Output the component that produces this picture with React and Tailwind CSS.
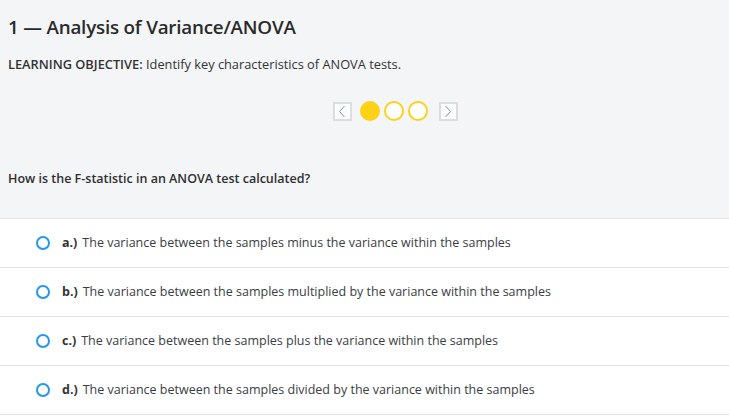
import React from "react";

const options = [
  ["a.)", "The variance between the samples minus the variance within the samples"],
  ["b.)", "The variance between the samples multiplied by the variance within the samples"],
  ["c.)", "The variance between the samples plus the variance within the samples"],
  ["d.)", "The variance between the samples divided by the variance within the samples"],
];

function Chevron({ dir }) {
  return (
    <svg width="8" height="13" viewBox="0 0 8 13" fill="none">
      {dir === "left" ? (
        <path d="M6.5 1 L1.5 6.5 L6.5 12" stroke="#5b8def" strokeWidth="1" />
      ) : (
        <path d="M1.5 1 L6.5 6.5 L1.5 12" stroke="#5b8def" strokeWidth="1" />
      )}
    </svg>
  );
}

export default function App() {
  return (
    <div className="w-[729px] h-[416px] bg-white overflow-hidden text-[#2b2b2b]" style={{ fontFamily: "'Open Sans', 'Noto Sans', sans-serif" }}>
      <div className="bg-[#f4f5f7] h-[218px] px-2 pt-[14px]">
        <h1 className="text-[18.8px] leading-[26px] font-semibold text-[#2a2a2a] tracking-[-0.2px]">1 — Analysis of Variance/ANOVA</h1>
        <p className="mt-[16px] text-[12.8px] leading-[16px] text-[#333]">
          <span className="font-semibold">LEARNING OBJECTIVE:</span> Identify key characteristics of ANOVA tests.
        </p>
        <div className="mt-[29px] flex items-center justify-center gap-[4px] pl-[61px]">
          <div className="w-[19px] h-[19px] border-2 border-[#dcdde0] bg-white flex items-center justify-center mr-[4px]">
            <Chevron dir="left" />
          </div>
          <div className="w-[20px] h-[20px] rounded-full bg-[#fcd116]" />
          <div className="w-[20px] h-[20px] rounded-full border-2 border-[#fcd116] bg-white" />
          <div className="w-[20px] h-[20px] rounded-full border-2 border-[#fcd116] bg-white" />
          <div className="w-[19px] h-[19px] border-2 border-[#dcdde0] bg-white flex items-center justify-center ml-[7px]">
            <Chevron dir="right" />
          </div>
        </div>
        <p className="mt-[50px] text-[12.5px] leading-[16px] font-semibold text-[#2f2f2f]">
          How is the F-statistic in an ANOVA test calculated?
        </p>
      </div>
      <div className="border-t border-[#e2e3e5]">
        {options.map(([k, t]) => (
          <div key={k} className="h-[49px] border-b border-[#e2e3e5] flex items-center pl-[36px]">
            <div className="w-[14px] h-[14px] rounded-full border-2 border-[#2196f3]" />
            <span className="ml-[12px] text-[12.5px] font-bold text-[#333]">{k}</span>
            <span className="ml-[5px] text-[12.5px] text-[#3a3d44]">{t}</span>
          </div>
        ))}
      </div>
    </div>
  );
}
